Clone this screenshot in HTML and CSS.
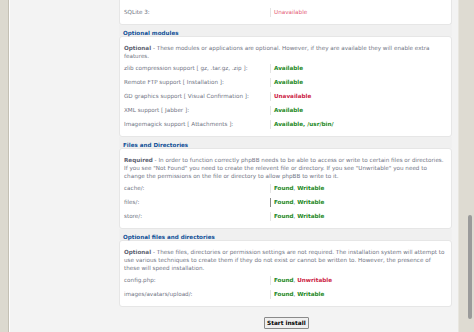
FILE: index.html
```html
<!DOCTYPE html>
<html lang="en">

<head>
    <meta charset="utf-8">
    <title>Install</title>
    <link rel="stylesheet" href="styles.css">
</head>

<body>
    <div class="page">
        <div class="side"></div>
        <div class="main">
            <div class="box first">
                <dl class="row">
                    <dt>SQLite 3:</dt>
                    <dd><span class="soft">Unavailable</span></dd>
                </dl>
            </div>

            <h3>Optional modules</h3>
            <div class="box">
                <p><strong>Optional</strong> - These modules or applications are optional. However, if they are available they will enable extra<br>features.</p>
                <dl class="row">
                    <dt>zlib compression support [ gz, .tar.gz, .zip ]:</dt>
                    <dd><b class="ok">Available</b></dd>
                </dl>
                <dl class="row">
                    <dt>Remote FTP support [ Installation ]:</dt>
                    <dd><b class="ok">Available</b></dd>
                </dl>
                <dl class="row">
                    <dt>GD graphics support [ Visual Confirmation ]:</dt>
                    <dd><b class="bad">Unavailable</b></dd>
                </dl>
                <dl class="row">
                    <dt>XML support [ Jabber ]:</dt>
                    <dd><b class="ok">Available</b></dd>
                </dl>
                <dl class="row">
                    <dt>Imagemagick support [ Attachments ]:</dt>
                    <dd><b class="ok">Available, /usr/bin/</b></dd>
                </dl>
            </div>

            <h3>Files and Directories</h3>
            <div class="box">
                <p><strong>Required</strong> - In order to function correctly phpBB needs to be able to access or write to certain files or directories.<br>If you see "Not Found" you need to create the relevent file or directory. If you see "Unwritable" you need to<br>change the permissions on the file or directory to allow phpBB to write to it.</p>
                <dl class="row">
                    <dt>cache/:</dt>
                    <dd><b class="ok">Found</b>, <b class="ok">Writable</b></dd>
                </dl>
                <dl class="row">
                    <dt>files/:</dt>
                    <dd class="dark"><b class="ok">Found</b>, <b class="ok">Writable</b></dd>
                </dl>
                <dl class="row">
                    <dt>store/:</dt>
                    <dd><b class="ok">Found</b>, <b class="ok">Writable</b></dd>
                </dl>
            </div>

            <h3>Optional files and directories</h3>
            <div class="box">
                <p><strong>Optional</strong> - These files, directories or permission settings are not required. The installation system will attempt to<br>use various techniques to create them if they do not exist or cannot be written to. However, the presence of<br>these will speed installation.</p>
                <dl class="row">
                    <dt>config.php:</dt>
                    <dd><b class="ok">Found</b>, <b class="bad">Unwritable</b></dd>
                </dl>
                <dl class="row">
                    <dt>images/avatars/upload/:</dt>
                    <dd><b class="ok">Found</b>, <b class="ok">Writable</b></dd>
                </dl>
            </div>

            <div class="submit">
                <button>Start install</button>
            </div>
        </div>
        <div class="scroll">
            <div class="thumb"></div>
        </div>
    </div>
</body>

</html>
```

FILE: styles.css
```css
* {
    box-sizing: border-box;
}

body {
    margin: 0;
    background: #f3f3f3;
    font-family: "DejaVu Sans", Verdana, sans-serif;
    font-size: 5.65px;
    color: #6f7483;
}

.page {
    display: flex;
    height: 332px;
    overflow: hidden;
}

.side {
    width: 9px;
    background: #dcd9cf;
    border-right: 1px solid #c4c0b4;
    box-shadow: 1px 0 0 #fff;
}

.main {
    flex: 1;
    padding: 0 6px 0 110px;
}

.scroll {
    width: 16px;
    background: #dedbd2;
    border-left: 1px solid #e8e6e0;
    position: relative;
}

.thumb {
    position: absolute;
    left: 9px;
    top: 215px;
    width: 4px;
    height: 104px;
    background: #9a9a9a;
    border-radius: 2px;
}

.box {
    background: #fff;
    border: 1px solid #e6e6e6;
    border-radius: 3px;
    padding: 7px 4px 5px;
}

.box.first {
    border-top: none;
    border-radius: 0 0 3px 3px;
    padding-top: 5px;
}

h3 {
    margin: 0;
    padding: 5px 4px 0;
    line-height: 6px;
    font-size: 5.6px;
    color: #115098;
    background: #f0f0f0;
}

p {
    margin: 0 0 1px;
    line-height: 8px;
    white-space: nowrap;
}

strong {
    color: #5c6170;
}

.row {
    display: flex;
    margin: 0;
    height: 14px;
    align-items: center;
}

dt {
    width: 146px;
}

dd {
    margin: 0;
    padding-left: 3px;
    border-left: 1px solid #e4e4e4;
    line-height: 9px;
}

dd.dark {
    border-left-color: #888;
}

.ok {
    color: #228822;
}

.bad {
    color: #cc2244;
}

.soft {
    color: #e45a74;
}

.submit {
    padding: 10px 0 0 145px;
}

button {
    font-family: "DejaVu Sans", Verdana, sans-serif;
    font-size: 5.8px;
    font-weight: bold;
    line-height: 8px;
    height: 12px;
    color: #000;
    background: #efefef;
    border: 1px solid #8a8a8a;
    border-radius: 1px;
    padding: 0 2px;
}
```
